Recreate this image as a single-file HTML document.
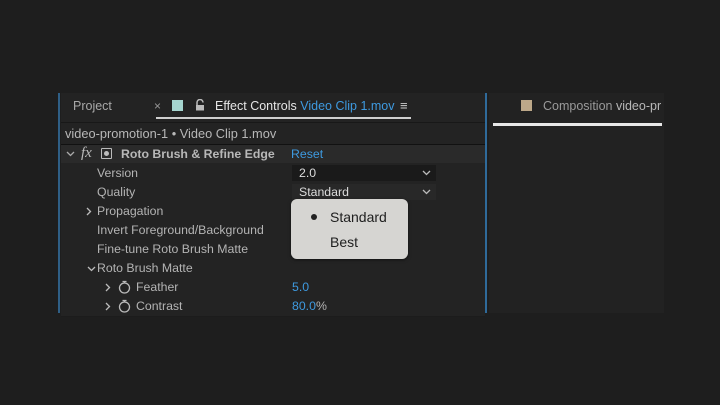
<!DOCTYPE html>
<html><head><style>
body{margin:0;width:720px;height:405px;background:#1e1e1e;font-family:"Liberation Sans",sans-serif;position:relative;overflow:hidden;color:#b4b4b4}
.a{position:absolute;white-space:nowrap}
.row{position:absolute;left:61px;width:424px;height:19px;border-bottom:1px solid #1c1c1c;background:#232323}
.t{font-size:12.3px}
.blue{color:#3e9ae0}
svg{position:absolute}
</style></head><body>
<div class="a" style="left:58px;top:93px;width:2px;height:220px;background:#2f5f86"></div>
<div class="a" style="left:61px;top:93px;width:424px;height:220px;background:#232323"></div>
<div class="a" style="left:485px;top:93px;width:2px;height:220px;background:#2f6a9a"></div>
<div class="a" style="left:489px;top:93px;width:175px;height:220px;background:#222"></div>
<!-- header -->
<div class="a" style="left:73px;top:99px;font-size:12.5px;color:#a8a8a8">Project</div>
<div class="a" style="left:154px;top:99px;font-size:12px;color:#999">×</div>
<div class="a" style="left:172px;top:100px;width:11px;height:11px;background:#a6d6d0"></div>
<svg style="left:195px;top:99px" width="10" height="12" viewBox="0 0 10 12"><path d="M2 6V3.5a3 3 0 0 1 6 0" fill="none" stroke="#bbb" stroke-width="1.5"/><rect x="1" y="6" width="8" height="5.5" fill="#bbb"/></svg>
<div class="a" style="left:215px;top:99px;font-size:12.5px;color:#e6e6e6">Effect Controls <span class="blue">Video Clip 1.mov</span></div>
<div class="a" style="left:400px;top:98px;font-size:13px;color:#ccc">≡</div>
<div class="a" style="left:156px;top:117px;width:255px;height:2px;background:#cfcfcf"></div>
<div class="a" style="left:61px;top:122px;width:424px;height:1px;background:#181818"></div>
<div class="a" style="left:521px;top:100px;width:11px;height:11px;background:#bda889"></div>
<div class="a" style="left:543px;top:99px;font-size:12.5px;color:#9a9a9a">Composition <span style="color:#b8b8b8">video-pr</span></div>
<div class="a" style="left:493px;top:123px;width:169px;height:3px;background:#e8e8e8"></div>
<div class="a" style="left:65px;top:126px;font-size:12.8px;color:#b8b8b8">video-promotion-1 • Video Clip 1.mov</div>
<div class="a" style="left:61px;top:144px;width:424px;height:1px;background:#111"></div>
<div class="a" style="left:61px;top:145px;width:424px;height:18px;background:#2a2a2a"></div>
<svg style="left:66px;top:151px" width="9" height="6" viewBox="0 0 9 6"><path d="M1 1l3.5 3.5L8 1" fill="none" stroke="#aaa" stroke-width="1.3"/></svg>
<div class="a" style="left:81px;top:145px;font-size:15px;font-style:italic;font-family:'Liberation Serif',serif;color:#bbb">fx</div>
<div class="a" style="left:101px;top:148px;width:9px;height:9px;border:1.5px solid #bbb;border-radius:1px"></div>
<div class="a" style="left:104px;top:151px;width:5px;height:5px;background:#bbb;border-radius:2.5px"></div>
<div class="a t" style="left:121px;top:147px;font-weight:bold;color:#b8b8b8">Roto Brush &amp; Refine Edge</div>
<div class="a t blue" style="left:291px;top:147px">Reset</div>
<div class="row" style="top:164px"></div><div class="row" style="top:183px"></div><div class="row" style="top:202px"></div><div class="row" style="top:221px"></div><div class="row" style="top:240px"></div><div class="row" style="top:259px"></div><div class="row" style="top:278px"></div><div class="row" style="top:297px"></div>
<div class="a" style="left:292px;top:165px;width:144px;height:16px;background:#1a1a1a"></div>
<div class="a" style="left:292px;top:184px;width:144px;height:16px;background:#282828"></div>
<div class="a t" style="left:97px;top:166px">Version</div>
<div class="a t" style="left:299px;top:166px;color:#ddd">2.0</div>
<svg style="left:422px;top:170px" width="9" height="6" viewBox="0 0 9 6"><path d="M1 1l3.5 3.5L8 1" fill="none" stroke="#bbb" stroke-width="1.3"/></svg>
<div class="a t" style="left:97px;top:185px">Quality</div>
<div class="a t" style="left:299px;top:185px;color:#ddd">Standard</div>
<svg style="left:422px;top:189px" width="9" height="6" viewBox="0 0 9 6"><path d="M1 1l3.5 3.5L8 1" fill="none" stroke="#bbb" stroke-width="1.3"/></svg>
<svg style="left:86px;top:207px" width="6" height="9" viewBox="0 0 6 9"><path d="M1 1l3.5 3.5L1 8" fill="none" stroke="#bbb" stroke-width="1.3"/></svg>
<div class="a t" style="left:97px;top:204px">Propagation</div>
<div class="a t" style="left:97px;top:223px">Invert Foreground/Background</div>
<div class="a t" style="left:97px;top:242px">Fine-tune Roto Brush Matte</div>
<svg style="left:87px;top:266px" width="9" height="6" viewBox="0 0 9 6"><path d="M1 1l3.5 3.5L8 1" fill="none" stroke="#bbb" stroke-width="1.3"/></svg>
<div class="a t" style="left:97px;top:261px">Roto Brush Matte</div>
<svg style="left:105px;top:283px" width="6" height="9" viewBox="0 0 6 9"><path d="M1 1l3.5 3.5L1 8" fill="none" stroke="#bbb" stroke-width="1.3"/></svg>
<svg style="left:118px;top:280px" width="13" height="14" viewBox="0 0 13 14"><circle cx="6.5" cy="8" r="5" fill="none" stroke="#bbb" stroke-width="1.3"/><path d="M4.5 1.5h4M6.5 1.5v1.5" stroke="#bbb" stroke-width="1.3"/></svg>
<div class="a t" style="left:136px;top:280px">Feather</div>
<div class="a t blue" style="left:292px;top:280px">5.0</div>
<svg style="left:105px;top:302px" width="6" height="9" viewBox="0 0 6 9"><path d="M1 1l3.5 3.5L1 8" fill="none" stroke="#bbb" stroke-width="1.3"/></svg>
<svg style="left:118px;top:299px" width="13" height="14" viewBox="0 0 13 14"><circle cx="6.5" cy="8" r="5" fill="none" stroke="#bbb" stroke-width="1.3"/><path d="M4.5 1.5h4M6.5 1.5v1.5" stroke="#bbb" stroke-width="1.3"/></svg>
<div class="a t" style="left:136px;top:299px">Contrast</div>
<div class="a t" style="left:292px;top:299px"><span class="blue">80.0</span>%</div>
<!-- popup -->
<div class="a" style="left:291px;top:199px;width:117px;height:60px;background:#d6d5d2;border-radius:6px;box-shadow:0 1px 3px rgba(0,0,0,.5)"></div>
<div class="a" style="left:311px;top:214px;width:6px;height:6px;background:#222;border-radius:50%"></div>
<div class="a" style="left:330px;top:209px;font-size:14px;color:#1e1e1e">Standard</div>
<div class="a" style="left:330px;top:234px;font-size:14px;color:#1e1e1e">Best</div>
</body></html>
